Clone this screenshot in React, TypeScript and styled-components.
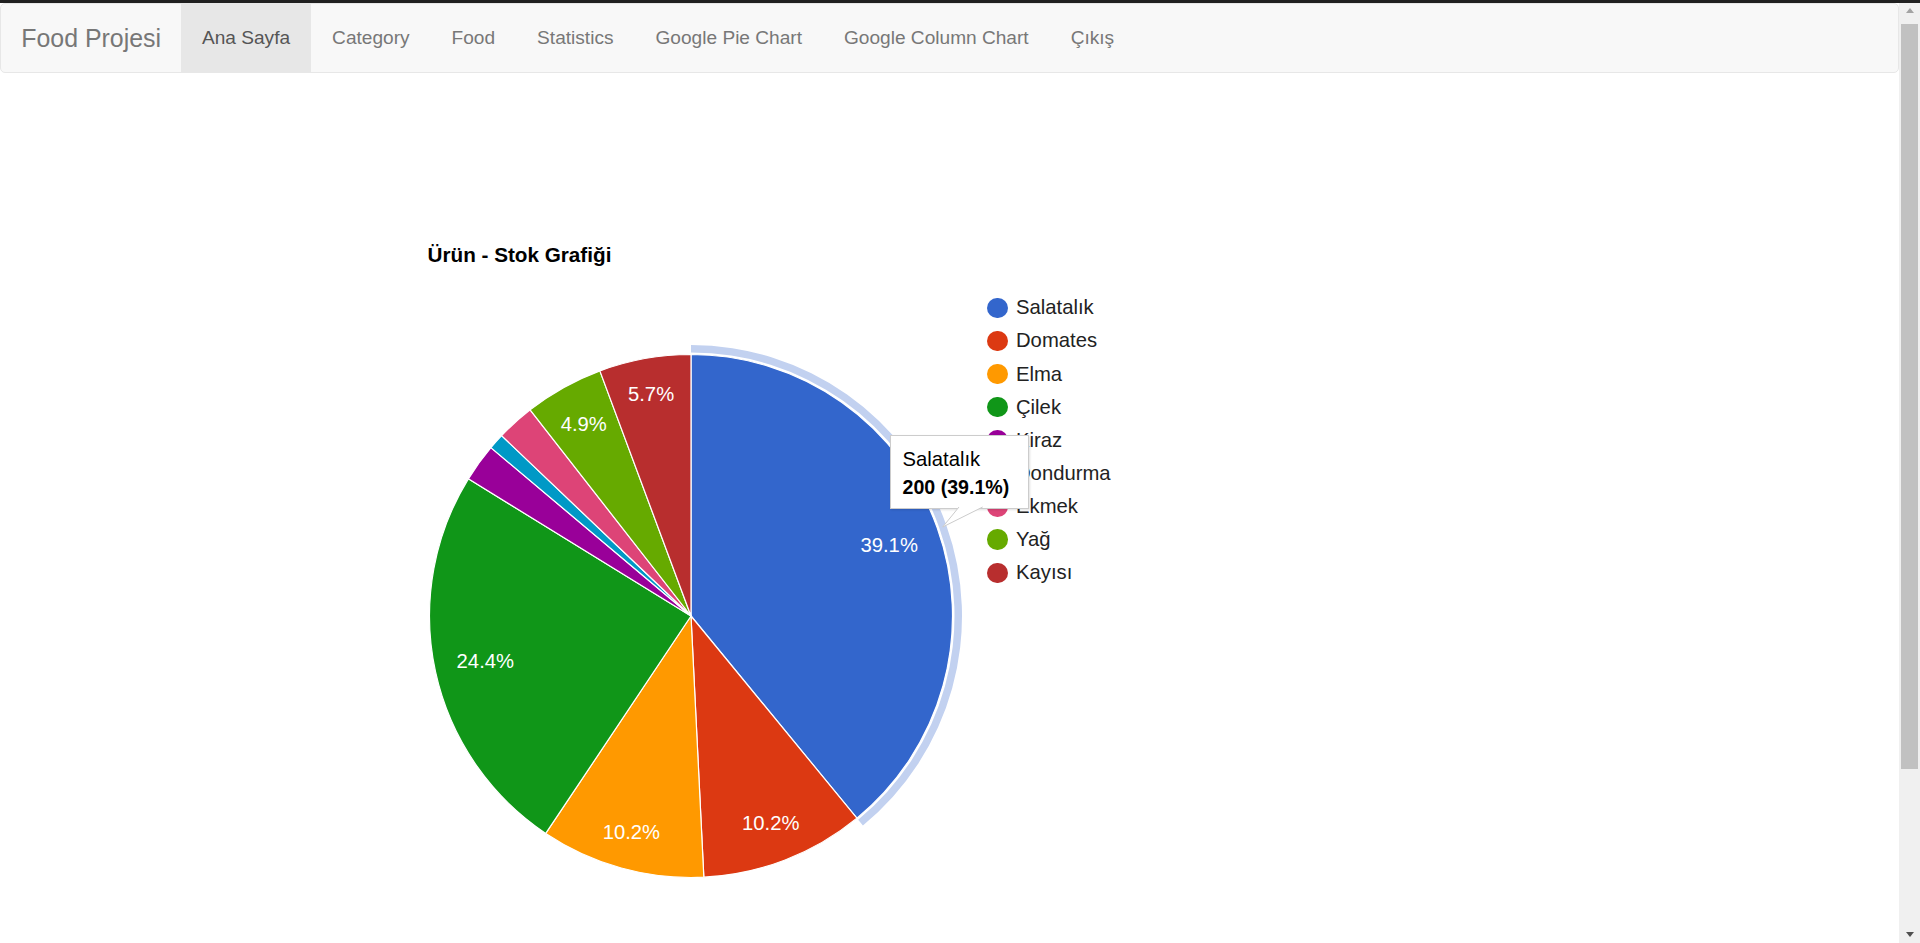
import React from "react";
import styled, { createGlobalStyle } from "styled-components";

const GlobalStyle = createGlobalStyle`
  html, body {
    margin: 0;
    padding: 0;
    height: 100%;
    overflow: hidden;
    background: #fff;
    font-family: "Liberation Sans", Arial, Helvetica, sans-serif;
  }
`;

const Frame = styled.div`
  display: flex;
  flex-direction: column;
  height: 100vh;
`;

const TopStrip = styled.div`
  height: 3px;
  flex-shrink: 0;
  background: #202020;
`;

const Viewport = styled.div`
  display: flex;
  flex: 1;
  min-height: 0;
`;

const PageArea = styled.main`
  flex: 1;
  min-width: 0;
  overflow: hidden;
`;

const ScrollRail = styled.div`
  width: 21px;
  flex-shrink: 0;
  display: flex;
  flex-direction: column;
  background: #f0f0f0;
`;

const ArrowButton = styled.div<{ $dir: "up" | "down" }>`
  height: 21px;
  flex-shrink: 0;
  display: flex;
  align-items: center;
  justify-content: center;

  &::after {
    content: "";
    width: 0;
    height: 0;
    border-left: 4.5px solid transparent;
    border-right: 4.5px solid transparent;
    ${(p) =>
      p.$dir === "up"
        ? "border-bottom: 5px solid #a3a3a3; margin-top: -6px;"
        : "border-top: 5px solid #505050; margin-top: 4px;"}
  }
`;

const Track = styled.div`
  flex: 1;
`;

const Thumb = styled.div`
  height: 745px;
  margin: 0 2px;
  background: #c1c1c1;
`;

const Navbar = styled.nav`
  display: flex;
  align-items: stretch;
  box-sizing: border-box;
  height: 70px;
  background: #f8f8f8;
  border: 1px solid #e7e7e7;
  border-radius: 5px;
`;

const Brand = styled.a`
  display: flex;
  align-items: center;
  padding: 0 20px 0 20.25px;
  font-size: 24.9px;
  color: #777;
  text-decoration: none;
`;

const NavLink = styled.a<{ $active?: boolean }>`
  display: flex;
  align-items: center;
  padding: 0 21px;
  font-size: 19.1px;
  color: ${(p) => (p.$active ? "#555" : "#777")};
  background: ${(p) => (p.$active ? "#e7e7e7" : "transparent")};
  text-decoration: none;
`;

const ChartSection = styled.section`
  position: relative;
  display: flex;
  align-items: flex-start;
  padding-top: 169.7px;
`;

const PieColumn = styled.div`
  margin-left: 410.5px;
  width: 560px;
  display: flex;
  flex-direction: column;
`;

const ChartTitle = styled.div`
  padding-left: 17px;
  margin-bottom: 69.3px;
  font-size: 20.7px;
  line-height: 24px;
  font-weight: bold;
  color: #000;
`;

const PieSvg = styled.svg`
  display: block;
  width: 560px;
  height: 560px;
`;

const Legend = styled.ul`
  list-style: none;
  margin: 48.5px 0 0 16.5px;
  padding: 0;
`;

const LegendItem = styled.li`
  display: flex;
  align-items: center;
  gap: 8.5px;
  height: 33.125px;
  font-size: 20.25px;
  color: #222;
`;

const Dot = styled.span<{ $color: string }>`
  width: 20.5px;
  height: 20.5px;
  border-radius: 50%;
  background: ${(p) => p.$color};
  flex-shrink: 0;
`;

const Tooltip = styled.div`
  position: absolute;
  left: 890px;
  top: 362px;
  box-sizing: border-box;
  width: 138.5px;
  height: 73.5px;
  padding: 9px 0 0 11.5px;
  background: #fff;
  border: 1px solid #cccccc;
  box-shadow: 1px 1px 2px rgba(0, 0, 0, 0.12);
  font-size: 20.25px;
  line-height: 28px;
  color: #000;
  white-space: nowrap;
`;

const TooltipValue = styled.div`
  font-weight: bold;
  font-size: 19.6px;
`;

const TooltipTail = styled.svg`
  position: absolute;
  left: 49px;
  top: calc(100% - 1px);
  width: 46px;
  height: 24px;
  overflow: visible;
`;

type Slice = {
  name: string;
  value: number;
  color: string;
  labelR?: number;
};

const slices: Slice[] = [
  { name: "Salatalık", value: 200, color: "#3366cc", labelR: 210.5 },
  { name: "Domates", value: 52, color: "#dc3912", labelR: 221.5 },
  { name: "Elma", value: 52, color: "#ff9900", labelR: 223.5 },
  { name: "Çilek", value: 125, color: "#109618", labelR: 210.5 },
  { name: "Kiraz", value: 12, color: "#990099" },
  { name: "Dondurma", value: 5, color: "#0099c6" },
  { name: "Ekmek", value: 12, color: "#dd4477" },
  { name: "Yağ", value: 25, color: "#66aa00", labelR: 220 },
  { name: "Kayısı", value: 29, color: "#b82e2e", labelR: 225.5 },
];

const CX = 280;
const CY = 280;
const R = 261.5;

const pt = (deg: number, r: number) => {
  const a = (deg * Math.PI) / 180;
  return [CX + r * Math.sin(a), CY - r * Math.cos(a)];
};

const slicePath = (a0: number, a1: number) => {
  const [x0, y0] = pt(a0, R);
  const [x1, y1] = pt(a1, R);
  const large = a1 - a0 > 180 ? 1 : 0;
  return `M${CX} ${CY} L${x0} ${y0} A${R} ${R} 0 ${large} 1 ${x1} ${y1} Z`;
};

const ringPath = (a0: number, a1: number, ri: number, ro: number) => {
  const [ox0, oy0] = pt(a0, ro);
  const [ox1, oy1] = pt(a1, ro);
  const [ix0, iy0] = pt(a0, ri);
  const [ix1, iy1] = pt(a1, ri);
  const large = a1 - a0 > 180 ? 1 : 0;
  return `M${ox0} ${oy0} A${ro} ${ro} 0 ${large} 1 ${ox1} ${oy1} L${ix1} ${iy1} A${ri} ${ri} 0 ${large} 0 ${ix0} ${iy0} Z`;
};

const PieChart = () => {
  const total = slices.reduce((s, d) => s + d.value, 0);
  let acc = 0;
  const arcs = slices.map((d) => {
    const a0 = (acc / total) * 360;
    acc += d.value;
    const a1 = (acc / total) * 360;
    return { ...d, a0, a1, pct: (d.value / total) * 100 };
  });
  const first = arcs[0];

  return (
    <PieSvg viewBox="0 0 560 560">
      <path d={ringPath(first.a0, first.a1, 263.5, 271)} fill="#c2d1f0" />
      {arcs.map((d) => (
        <path key={d.name} d={slicePath(d.a0, d.a1)} fill={d.color} stroke="#fff" strokeWidth={1.2} />
      ))}
      {arcs
        .filter((d) => d.labelR)
        .map((d) => {
          const [x, y] = pt((d.a0 + d.a1) / 2, d.labelR as number);
          return (
            <text
              key={`${d.name}-label`}
              x={x}
              y={y + 7.2}
              fill="#fff"
              fontSize={20.25}
              textAnchor="middle"
              fontFamily='"Liberation Sans", Arial, sans-serif'
            >
              {d.pct.toFixed(1)}%
            </text>
          );
        })}
    </PieSvg>
  );
};

const navItems = [
  "Ana Sayfa",
  "Category",
  "Food",
  "Statistics",
  "Google Pie Chart",
  "Google Column Chart",
  "Çıkış",
];

const App = () => (
  <Frame>
    <GlobalStyle />
    <TopStrip />
    <Viewport>
      <PageArea>
        <Navbar>
          <Brand href="#">Food Projesi</Brand>
          {navItems.map((item, index) => (
            <NavLink key={item} href="#" $active={index === 0}>
              {item}
            </NavLink>
          ))}
        </Navbar>
        <ChartSection>
          <PieColumn>
            <ChartTitle>Ürün - Stok Grafiği</ChartTitle>
            <PieChart />
          </PieColumn>
          <Legend>
            {slices.map((s) => (
              <LegendItem key={s.name}>
                <Dot $color={s.color} />
                {s.name}
              </LegendItem>
            ))}
          </Legend>
          <Tooltip>
            <div>Salatalık</div>
            <TooltipValue>200 (39.1%)</TooltipValue>
            <TooltipTail viewBox="0 0 46 24">
              <polygon points="19,0 42.7,0 2.7,20" fill="#fff" />
              <polyline points="19,0 2.7,20 42.7,0" fill="none" stroke="#cccccc" strokeWidth={1} />
            </TooltipTail>
          </Tooltip>
        </ChartSection>
      </PageArea>
      <ScrollRail>
        <ArrowButton $dir="up" />
        <Thumb />
        <Track />
        <ArrowButton $dir="down" />
      </ScrollRail>
    </Viewport>
  </Frame>
);

export default App;
